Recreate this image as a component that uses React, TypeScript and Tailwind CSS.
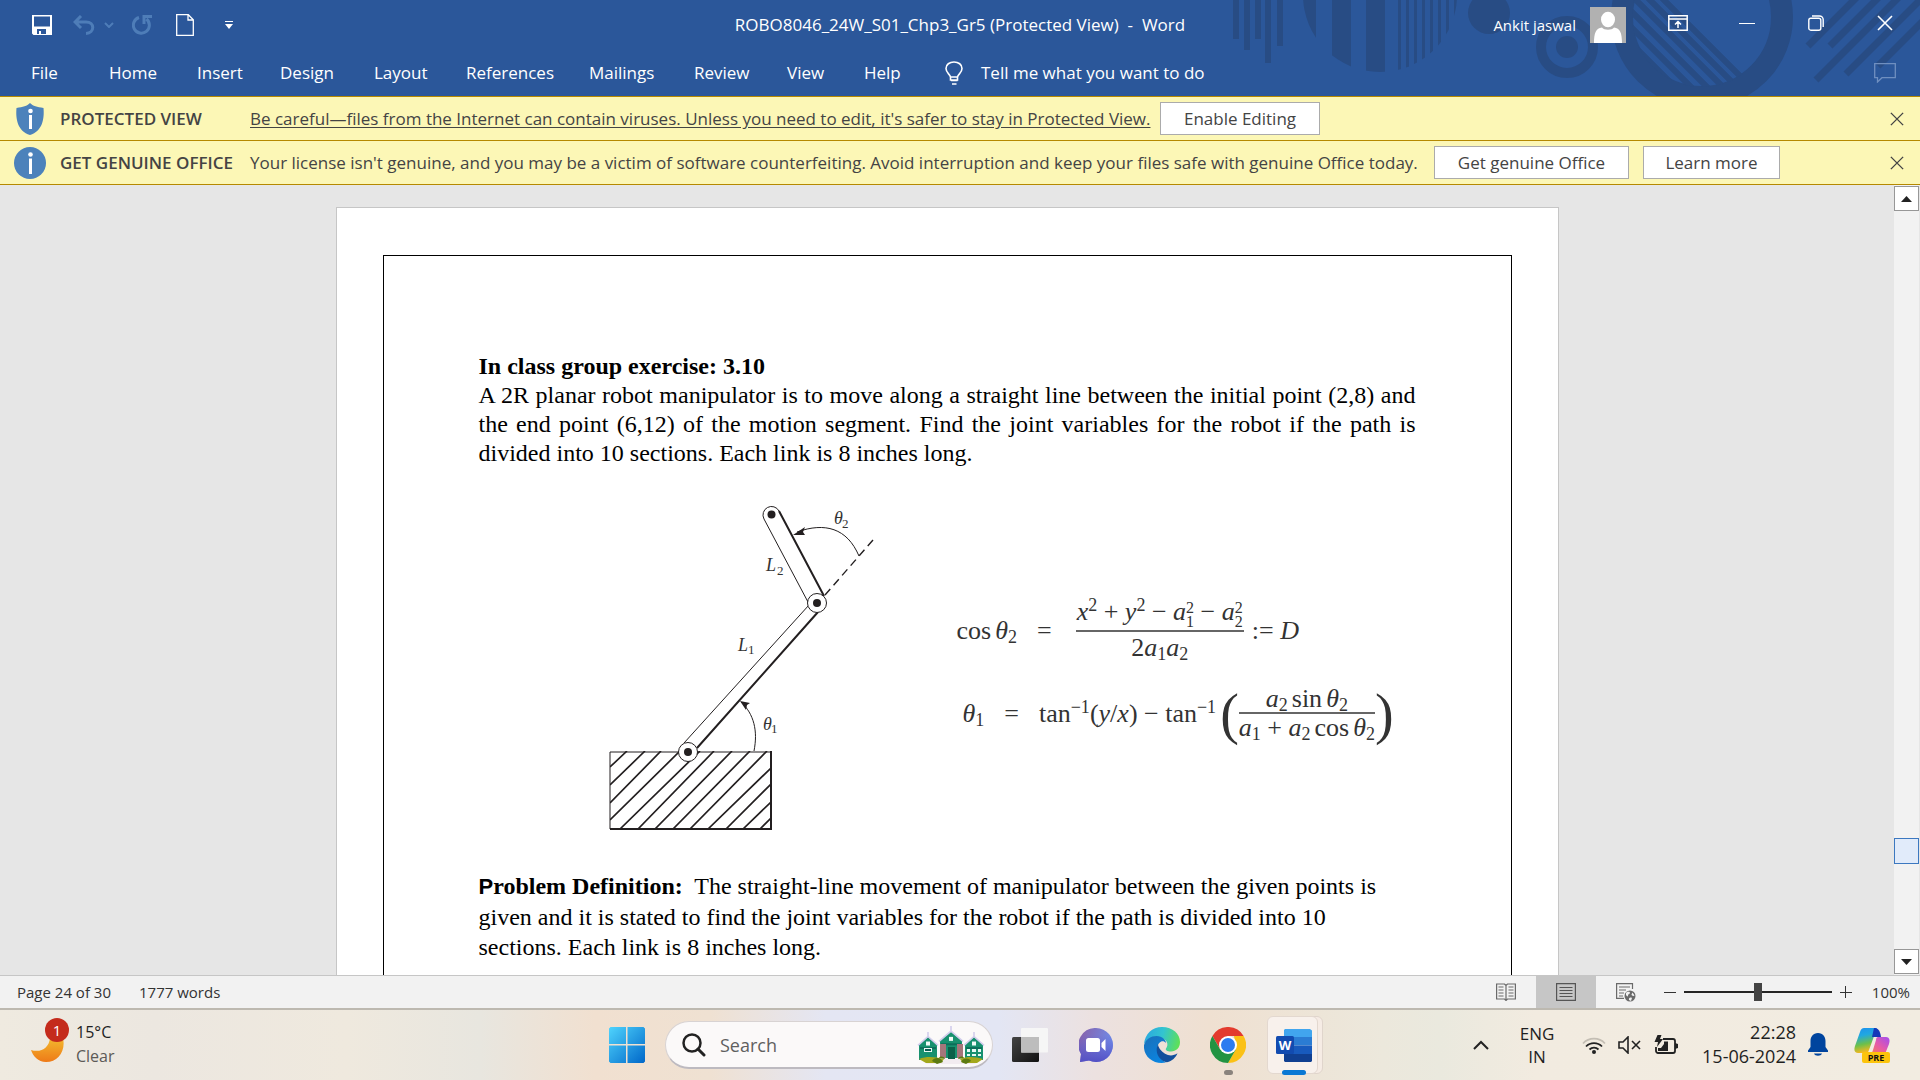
import React from "react";

const UI = "font-['Open_Sans','Noto_Sans',sans-serif]";
const SERIF = "font-['Liberation_Serif',serif]";

const tabs = [
  { name: "File", width: "w-[78px]" },
  { name: "Home", width: "w-[88px]" },
  { name: "Insert", width: "w-[83px]" },
  { name: "Design", width: "w-[94px]" },
  { name: "Layout", width: "w-[92px]" },
  { name: "References", width: "w-[123px]" },
  { name: "Mailings", width: "w-[105px]" },
  { name: "Review", width: "w-[93px]" },
  { name: "View", width: "w-[77px]" },
  { name: "Help", width: "w-[81px]" },
];

function HeaderPattern() {
  return (
    <svg className="pointer-events-none absolute right-0 top-0" width="720" height="96" viewBox="1200 0 720 96" fill="#284c84" aria-hidden="true">
      <defs>
        <clipPath id="striped"><circle cx="1380" cy="-5" r="77" /></clipPath>
        <clipPath id="inner"><circle cx="1702" cy="17" r="70" /></clipPath>
      </defs>
      <path d="M1233 0h6v39h-6zM1244 0h6v50h-6zM1255 0h6v39h-6zM1265 0h6v63h-6zM1277 0h6v46h-6z" />
      <path clipPath="url(#striped)" d="M1300 0h16v80h-16zM1332 0h19v80h-19zM1366 0h19v80h-19zM1398 0h3v80h-3zM1406 0h3v80h-3zM1414 0h3v80h-3zM1422 0h3v80h-3zM1430 0h3v80h-3zM1438 0h3v80h-3zM1446 0h3v80h-3zM1454 0h3v80h-3z" />
      <circle cx="1489" cy="13" r="21" />
      <circle cx="1567" cy="47" r="26" fill="none" stroke="#284c84" strokeWidth="10" />
      <circle cx="1567" cy="47" r="11" />
      <circle cx="1702" cy="17" r="80" fill="none" stroke="#284c84" strokeWidth="22" />
      <g clipPath="url(#inner)" stroke="#284c84" strokeWidth="6">
        <path d="M1612 24l80 80M1612 8l90 90M1616 -4l96 96M1628 -8l98 98M1642 -8l98 98M1656 -8l100 100" />
      </g>
      <g stroke="#284c84" strokeWidth="7">
        <path d="M1808 46L1862 -8M1830 46L1884 -8M1816 80L1904 -8M1846 74L1928 -8M1878 66L1930 14" />
      </g>
    </svg>
  );
}

function WindowButton({ label, children }: { label: string; children: React.ReactNode }) {
  return <button aria-label={label} className="flex h-10 w-[69px] items-center justify-center">{children}</button>;
}

function CloseGlyph({ size }: { size: number }) {
  return (
    <svg width={size} height={size} viewBox="0 0 16 16" fill="none" stroke="currentColor" strokeWidth="1.6">
      <path d="M1 1l14 14M15 1L1 15" />
    </svg>
  );
}

function Header() {
  return (
    <header className="relative h-24 shrink-0 bg-[#2b579a] text-white">
      <HeaderPattern />
      <div className="relative grid h-[50px] grid-cols-[1fr_auto_1fr] items-center">
        <div className="flex items-center pl-5">
          <button aria-label="Save" className="flex w-11 justify-center">
            <svg width="20" height="20" viewBox="0 0 20 20"><path fill="#fff" fillRule="evenodd" d="M0 0h20v20H1.500L0 18.500zM2 1.500v10h16v-10zM5 14v5h2v-3h2v3h5v-5z" /></svg>
          </button>
          <button aria-label="Undo" className="flex w-10 justify-center">
            <svg width="22" height="20" viewBox="0 0 22 20" fill="none" stroke="#4e7db8" strokeWidth="3"><path d="M8 1L2 7l6 6M3 7h10c9 0 9 11 0 11.500" /></svg>
          </button>
          <button aria-label="Undo history" className="flex w-2.5 justify-center">
            <svg width="10" height="6" viewBox="0 0 10 6" fill="none" stroke="#4e7db8" strokeWidth="2"><path d="M1 1l4 4 4-4" /></svg>
          </button>
          <button aria-label="Repeat" className="flex w-14 justify-center">
            <svg width="20" height="20" viewBox="0 0 20 20" fill="none" stroke="#4e7db8" strokeWidth="3"><path d="M7 2.500A8 8 0 1 0 14.500 4M12 9V1.500h8" /></svg>
          </button>
          <button aria-label="New" className="flex w-[30px] justify-center">
            <svg width="18" height="22" viewBox="0 0 18 22" fill="none" stroke="#fff" strokeWidth="1.300"><path d="M.7.7h11.600l5 5v15.600H.7zM12 1v5h5" /></svg>
          </button>
          <button aria-label="Customize Quick Access Toolbar" className="flex w-[58px] justify-center">
            <svg width="8" height="8" viewBox="0 0 8 8" fill="#fff"><path d="M0 0h8v1H0zM0 3h8L4 8z" /></svg>
          </button>
        </div>
        <h1 className="whitespace-pre text-[17px]">{"ROBO8046_24W_S01_Chp3_Gr5 (Protected View)  -  Word"}</h1>
        <div className="flex items-center justify-end">
          <span className="text-[15px]">Ankit jaswal</span>
          <svg className="ml-3.5 mr-[17px]" width="36" height="36" viewBox="0 0 36 36">
            <path fill="#b1b1b1" d="M0 0h36v36H0z" />
            <ellipse cx="18" cy="12.500" rx="7" ry="7.800" fill="#fff" />
            <path fill="#fff" d="M4 36c0-10 2-15 8-15.500 2 3 10 3 12 0 6 .5 8 5.500 8 15.500z" />
          </svg>
          <div className="mr-px flex pb-1">
            <WindowButton label="Ribbon Display Options">
              <svg width="20" height="16" viewBox="0 0 20 16" fill="none" stroke="#fff" strokeWidth="1.500"><path d="M.8.8h18.400v14.400H.8zM1 4h18M10 13V6.500M7 9.500l3-3 3 3" /></svg>
            </WindowButton>
            <WindowButton label="Minimize"><span className="h-px w-4 bg-white" /></WindowButton>
            <WindowButton label="Restore">
              <svg width="16" height="16" viewBox="0 0 16 16" fill="none" stroke="#fff" strokeWidth="1.400"><rect x=".8" y="3.200" width="12" height="12" rx="2" /><path d="M4 1h7.500A3.700 3.700 0 0 1 15.200 4.700V12" /></svg>
            </WindowButton>
            <WindowButton label="Close"><CloseGlyph size={16} /></WindowButton>
          </div>
        </div>
      </div>
      <nav className="relative flex h-[46px] items-center pl-[31px] text-[17px]">
        {tabs.map((t) => (
          <button key={t.name} className={`${t.width} shrink-0 text-left`}>{t.name}</button>
        ))}
        <button className="flex items-center gap-[18px]">
          <svg width="18" height="24" viewBox="0 0 18 24" fill="none" stroke="#fff" strokeWidth="1.600"><path d="M5.500 19v-3C5 13 1 12 1 7.500 1 3.500 4.500 1 9 1s8 2.500 8 6.500c0 4.500-4 5.500-4.500 8.500v3zM5.500 16h7M6 19.500h6.500M7 23h4.500" /></svg>
          Tell me what you want to do
        </button>
        <button aria-label="Comments" className="ml-auto mr-6">
          <svg width="22" height="20" viewBox="0 0 22 20" fill="none" stroke="#6f8fc0" strokeWidth="1.300"><path d="M.7.7h20.600v14H8L3.500 19v-4.300H.7z" /></svg>
        </button>
      </nav>
    </header>
  );
}

function BarButton({ children, width }: { children: React.ReactNode; width: string }) {
  return <button className={`${width} h-[33px] shrink-0 border border-[#ababab] bg-white text-[17px]`}>{children}</button>;
}

function MessageBars() {
  return (
    <div className="shrink-0 bg-[#fcf7b6] text-[17px] text-[#444]">
      <section className="flex h-11 items-center border-t border-[#b58900] pl-3.5">
        <svg width="32" height="32" viewBox="0 0 32 32">
          <path fill="#4c82bb" d="M16 0c3 3 7 4 13.500 5 1 11-1 23-13.500 27C3.500 28 1.500 16 2.500 5 9 4 13 3 16 0z" />
          <circle cx="16.500" cy="8" r="2.300" fill="#fff" /><path fill="#fff" d="M15 12h3v14h-3z" />
        </svg>
        <h2 className="ml-3.5 w-[190px] shrink-0 font-semibold">PROTECTED VIEW</h2>
        <a href="#protected" className="w-[910px] whitespace-nowrap underline underline-offset-2">Be careful—files from the Internet can contain viruses. Unless you need to edit, it's safer to stay in Protected View.</a>
        <BarButton width="w-40">Enable Editing</BarButton>
        <button aria-label="Close" className="ml-auto mr-4"><CloseGlyph size={14} /></button>
      </section>
      <section className="flex h-[45px] items-center border-y border-[#b58900] pl-3.5">
        <svg width="32" height="32" viewBox="0 0 32 32">
          <circle cx="16" cy="16" r="16" fill="#4c82bb" />
          <circle cx="16.500" cy="7.500" r="2.300" fill="#fff" /><path fill="#fff" d="M15 11.500h3V27h-3z" />
        </svg>
        <h2 className="ml-3.5 w-[190px] shrink-0 whitespace-nowrap font-semibold">GET GENUINE OFFICE</h2>
        <p className="w-[1184px] whitespace-nowrap">Your license isn't genuine, and you may be a victim of software counterfeiting. Avoid interruption and keep your files safe with genuine Office today.</p>
        <div className="flex gap-3.5">
          <BarButton width="w-[195px]">Get genuine Office</BarButton>
          <BarButton width="w-[137px]">Learn more</BarButton>
        </div>
        <button aria-label="Close" className="ml-auto mr-4"><CloseGlyph size={14} /></button>
      </section>
    </div>
  );
}

function RobotFigure() {
  return (
    <svg className="shrink-0" width="290" height="345" viewBox="600 495 290 345" fill="none" stroke="#231f20" role="img" aria-label="Two link planar arm">
      <defs><clipPath id="base"><path d="M610 751h161v78H610z" /></clipPath></defs>
      <path clipPath="url(#base)" strokeWidth="1.700" d="M610 767l17-16M610 785l35-34M610 803l51-52M610 820l70-69M620 829l80-78M638 829l76-78M655 829l77-78M673 829l77-78M690 829l77-78M708 829l63-61M726 829l45-45M743 829l28-27M760 829l11-11" />
      <path strokeWidth="1" d="M771 752H610v77" />
      <path strokeWidth="2" d="M610 829h161v-78" />
      <path strokeWidth="1" d="M684 743l125-138M764 519l44 83" />
      <path strokeWidth="2" d="M697 748l121-136M779 511l45 85" />
      <path strokeWidth="1" d="M764 519a8.500 8.500 0 1 1 15-8" />
      <path strokeWidth="1.400" strokeDasharray="8 5" d="M825 595l48-55" />
      <circle cx="688" cy="752" r="9.500" fill="#fff" strokeWidth="1" />
      <circle cx="817" cy="603" r="9.500" fill="#fff" strokeWidth="1" />
      <path strokeWidth="1" d="M754 751c4-20 0-37-13-49M859 556c-12-28-34-34-62-24" />
      <g fill="#231f20" stroke="none">
        <circle cx="688" cy="752" r="4" /><circle cx="817" cy="603" r="4" /><circle cx="771.500" cy="514.500" r="4" />
        <path d="M740 701l10 2-3 2-1 5zM793 535l12-8-2 5 2 3z" />
      </g>
      <g fill="#333" stroke="none" className="font-['Liberation_Serif',serif]">
        <text x="738" y="651" fontSize="18" fontStyle="italic">L</text><text x="748" y="654" fontSize="13">1</text>
        <text x="766" y="571" fontSize="18" fontStyle="italic">L</text><text x="777" y="575" fontSize="13">2</text>
        <text x="763" y="730" fontSize="18" fontStyle="italic">θ</text><text x="771" y="733" fontSize="13">1</text>
        <text x="834" y="524" fontSize="18" fontStyle="italic">θ</text><text x="842" y="528" fontSize="13">2</text>
      </g>
    </svg>
  );
}

const Sub = ({ children }: { children: React.ReactNode }) => <sub className="bottom-[-4px] text-[18px] leading-none">{children}</sub>;
const Sup = ({ children }: { children: React.ReactNode }) => <sup className="top-[-9px] text-[18px] leading-none">{children}</sup>;
const SubSup = ({ sub, sup }: { sub: string; sup: string }) => (
  <span className="inline-flex flex-col align-middle text-[16px] leading-[14px]"><span>{sup}</span><span>{sub}</span></span>
);

function Equations() {
  return (
    <div className="ml-[67px] flex flex-col pt-[103px] text-[26px] leading-none text-[#333]">
      <div className="flex items-center whitespace-nowrap">
        <span>cos<i className="ml-1">θ</i><Sub>2</Sub></span>
        <span className="ml-5">=</span>
        <span className="ml-6 flex flex-col items-center">
          <span className="flex h-[34px] items-center border-b-2 border-[#666] px-px">
            <span><i>x</i><Sup>2</Sup> + <i>y</i><Sup>2</Sup> − <i>a</i><SubSup sup="2" sub="1" /> − <i>a</i><SubSup sup="2" sub="2" /></span>
          </span>
          <span className="flex h-8 items-center"><span>2<i>a</i><Sub>1</Sub><i>a</i><Sub>2</Sub></span></span>
        </span>
        <span className="ml-2">:= <i>D</i></span>
      </div>
      <div className="mt-5 flex h-[60px] items-center whitespace-nowrap pl-1.5">
        <span><i>θ</i><Sub>1</Sub></span>
        <span className="ml-5">=</span>
        <span className="ml-5">tan<Sup>−1</Sup>(<i>y</i>/<i>x</i>) − tan<Sup>−1</Sup></span>
        <span className="ml-1 text-[56px] leading-[60px]">(</span>
        <span className="flex flex-col items-center">
          <span className="flex h-7 w-full items-center justify-center border-b-2 border-[#666]"><span><i>a</i><Sub>2</Sub><span className="mx-1">sin</span><i>θ</i><Sub>2</Sub></span></span>
          <span className="flex h-7 items-center"><span><i>a</i><Sub>1</Sub> + <i>a</i><Sub>2</Sub><span className="mx-1">cos</span><i>θ</i><Sub>2</Sub></span></span>
        </span>
        <span className="text-[56px] leading-[60px]">)</span>
      </div>
    </div>
  );
}

function DocumentArea() {
  return (
    <main className="flex min-h-0 flex-1 overflow-hidden bg-[#e6e6e6]">
      <div className="flex min-w-0 flex-1 justify-center overflow-hidden pt-[22px]">
        <article className={`h-[1580px] w-[1223px] shrink-0 border border-[#c6c6c6] bg-white px-[46px] pt-[47px] text-black ${SERIF}`}>
          <div className="h-full border border-black px-[95px] pt-[96px] text-2xl leading-[29px]">
            <h2 className="font-bold">In class group exercise: 3.10</h2>
            <p className="text-justify">A 2R planar robot manipulator is to move along a straight line between the initial point (2,8) and the end point (6,12) of the motion segment. Find the joint variables for the robot if the path is divided into 10 sections. Each link is 8 inches long.</p>
            <div className="mt-[27px] flex h-[345px] pl-[121px]">
              <RobotFigure />
              <Equations />
            </div>
            <p className="mt-[31px] pr-6 leading-[30px]"><b><span className="font-['Liberation_Sans',sans-serif] text-[22px]">P</span>roblem Definition:</b>&nbsp; The straight-line movement of manipulator between the given points is given and it is stated to find the joint variables for the robot if the path is divided into 10 sections. Each link is 8 inches long.</p>
          </div>
        </article>
      </div>
      <div className="mr-px flex w-[25px] shrink-0 flex-col bg-[#f2f2f2] py-px">
        <button aria-label="Scroll up" className="flex h-[25px] items-center justify-center border border-[#979797] bg-white">
          <svg width="11" height="6" viewBox="0 0 11 6" fill="#222"><path d="M5.500 0L11 6H0z" /></svg>
        </button>
        <div className="grow-[88]" />
        <div className="h-[26px] border border-[#3c78c0] bg-[#e1ebfa]" />
        <div className="grow-[12]" />
        <button aria-label="Scroll down" className="flex h-[25px] items-center justify-center border border-[#979797] bg-white">
          <svg width="11" height="6" viewBox="0 0 11 6" fill="#222"><path d="M0 0h11L5.500 6z" /></svg>
        </button>
      </div>
    </main>
  );
}

function StatusBar() {
  return (
    <footer className="flex h-[33px] shrink-0 items-center border-t border-[#c6c6c6] bg-[#f2f2f2] pl-[17px] pr-2.5 text-[15px] text-[#333]">
      <span className="w-[122px]">Page 24 of 30</span>
      <span>1777 words</span>
      <div className="ml-auto flex h-full items-center">
        <button aria-label="Read Mode" className="flex h-full w-[60px] items-center justify-center">
          <svg width="20" height="18" viewBox="0 0 20 18" fill="none" stroke="#6a6a6a" strokeWidth="1.200"><path d="M10 2.500L8.500 1H.6v15h7.900l1.500 1.500 1.500-1.500h7.900V1h-7.900zM10 2.500v15" /><path d="M2.500 4h5M2.500 7h5M2.500 10h5M2.500 13h5M12.500 4h5M12.500 7h5M12.500 10h5M12.500 13h5" /></svg>
        </button>
        <button aria-label="Print Layout" className="flex h-full w-[60px] items-center justify-center bg-[#c6c6c6]">
          <svg width="20" height="18" viewBox="0 0 20 18" fill="none" stroke="#555" strokeWidth="1.200"><path d="M.6.600h18.800v16.800H.6zM3.500 4.500h13M3.500 7.500h13M3.500 10.500h13M3.500 13.500h13" /></svg>
        </button>
        <button aria-label="Web Layout" className="flex h-full w-[60px] items-center justify-center">
          <svg width="20" height="19" viewBox="0 0 20 19" fill="none" stroke="#6a6a6a" strokeWidth="1.200"><path d="M16.500 6V.6H.6v14.800H8M3 4h11M3 7h7M3 10h5M3 13h4" /><circle cx="14" cy="13" r="5.500" fill="#6a6a6a" stroke="none" /><path fill="#f2f2f2" stroke="none" d="M10 10c2-2 4-1 4 0s-2 1-2 2.500-1 1-2-.5zM16.500 9.500l2 3c-1 1-3 0-3-1zM13 17c-.5-2 1-3 3-2l-1 3z" /></svg>
        </button>
        <button aria-label="Zoom out" className="ml-2 flex h-full w-5 items-center"><span className="h-px w-3 bg-[#333]" /></button>
        <input type="range" aria-label="Zoom" min="0" max="200" defaultValue="100" className="h-[18px] w-[148px] appearance-none bg-transparent [&::-webkit-slider-runnable-track]:h-[2px] [&::-webkit-slider-runnable-track]:bg-[#262626] [&::-webkit-slider-thumb]:mt-[-8px] [&::-webkit-slider-thumb]:h-[18px] [&::-webkit-slider-thumb]:w-2 [&::-webkit-slider-thumb]:appearance-none [&::-webkit-slider-thumb]:bg-[#444]" />
        <button aria-label="Zoom in" className="flex h-full w-7 items-center justify-center">
          <svg width="12" height="12" viewBox="0 0 12 12" stroke="#333"><path d="M0 6.500h12M5.500 0v12" /></svg>
        </button>
        <span className="w-[50px] text-right">100%</span>
      </div>
    </footer>
  );
}

function TaskButton({ label, children }: { label: string; children: React.ReactNode }) {
  return <button aria-label={label} className="relative flex h-16 w-[66px] items-center justify-center">{children}</button>;
}

function House({ x, y, w, h }: { x: number; y: number; w: number; h: number }) {
  return (
    <g transform={`translate(${x} ${y})`}>
      <path fill="#17916f" d={`M1 ${h * 0.45}L${w / 2} ${h * 0.18}L${w - 1} ${h * 0.45}V${h}H1z`} />
      <path fill="none" stroke="#d2cdec" strokeWidth="1.600" d={`M0 ${h * 0.48}L${w / 2} ${h * 0.16}L${w} ${h * 0.48}M${w / 2} ${h * 0.18}V0`} />
      <path fill="#0c6e5a" d={`M2 ${h * 0.54}h${w - 4}v2h-${w - 4}z`} />
      <path fill="#f0fbf7" d={`M${w / 2 - 2} ${h * 0.34}h4v4h-4z`} />
    </g>
  );
}

function Taskbar() {
  return (
    <footer className="grid h-[72px] shrink-0 grid-cols-[1fr_auto_1fr] items-center border-t-2 border-[#bdb9b0] bg-[linear-gradient(90deg,#efeae0_0%,#ece7e0_8%,#efe9de_18%,#e8e6df_25%,#f1e0d0_31%,#efe1d2_37%,#e4e6f3_43%,#e3e6f4_52%,#ece1e0_57%,#efe0d1_63%,#ece8dc_72%,#eae9de_75%,#f2ebe0_80%,#f2ece1_100%)] text-[#1f1f1f]">
      <button className="flex items-center pb-0.5 text-left text-base leading-6">
        <span className="relative ml-[30px] mr-[11px] block h-10 w-[35px]">
          <svg className="absolute left-0 top-3" width="35" height="27" viewBox="0 0 35 27">
            <defs><linearGradient id="moon" x2="0" y2="1"><stop stopColor="#f3b92e" /><stop offset="1" stopColor="#ee7a18" /></linearGradient></defs>
            <path fill="url(#moon)" d="M33 2c3 13-5 24-17 24C8 26 3 20 1 14c10 3 18-2 19-12z" />
          </svg>
          <span className="absolute left-[15px] top-[-6px] flex size-6 items-center justify-center rounded-full bg-[#c42b1c] text-[15px] text-white">1</span>
        </span>
        <span><span className="block">15°C</span><span className="block text-[#5c5a57]">Clear</span></span>
      </button>

      <div className="flex items-center pl-4">
        <button aria-label="Start">
          <svg width="36" height="36" viewBox="0 0 36 36">
            <defs><linearGradient id="win" x2="1" y2="1"><stop stopColor="#4fd4fd" /><stop offset="1" stopColor="#0067c9" /></linearGradient></defs>
            <path fill="url(#win)" d="M1.500 0H17v17H0V1.500zM18.500 0h16L36 1.500V17H18.500zM0 18.500h17V36H1.500L0 34.500zM18.500 18.500H36v16L34.500 36h-16z" />
          </svg>
        </button>
        <label className="ml-5 mr-1 flex h-12 w-[328px] items-center rounded-full border border-b-2 border-[#d8d3d3] border-b-[#bdbac0] bg-[#fbf9f9] pl-4">
          <svg width="24" height="24" viewBox="0 0 24 24" fill="none" stroke="#222" strokeWidth="2.500"><circle cx="10" cy="10" r="8.500" /><path d="M16 16l6 6" strokeLinecap="round" strokeWidth="3" /></svg>
          <input aria-label="Search" placeholder="Search" className="ml-3.5 min-w-0 flex-1 bg-transparent text-lg outline-none placeholder:text-[#5f5f5f]" />
          <svg className="mr-[7px]" width="68" height="38" viewBox="0 0 68 38">
            <path fill="#f2ecf0" d="M4 33h60l-6 5H10z" />
            <House x={1} y={6} w={20} h={28} />
            <House x={22} y={0} w={24} h={32} />
            <House x={47} y={6} w={20} h={28} />
            <path fill="#a5767a" d="M23 18h6v14h-6zM40 18h6v14h-6z" />
            <path fill="#0b6149" d="M31 21h7v12h-7z" />
            <path fill="#e9faf5" d="M7 22h8v4H7zM50 23h3v3h-3zM55 23h4v3h-4zM61 23h3v3h-3zM50 28h3v2h-3zM55 28h4v2h-4zM61 28h3v2h-3z" />
            <path fill="#0b5b52" d="M8 23h6v2H8z" />
            <path fill="#a3a81c" d="M2 33c8-3 16-2 25 0l-3 4H9zM43 33c8-3 16-2 23 0l-6 4H46z" />
            <path fill="#5c7a12" d="M15 35c2-4 9-4 11 1l-6 2zM44 36c2-5 9-4 10-1l-5 3zM22 32c1-2 5-2 6 1zM41 33c1-3 5-3 6-1z" />
          </svg>
        </label>
        <TaskButton label="Task View">
          <svg width="36" height="34" viewBox="0 0 36 34">
            <defs><linearGradient id="dark" x2="1" y2="1"><stop stopColor="#444" /><stop offset="1" stopColor="#111" /></linearGradient></defs>
            <rect y="9" width="27" height="25" rx="1.500" fill="url(#dark)" /><rect x="9" width="27" height="24.500" rx="1" fill="#f6f6f6" /><path fill="#bdbdbd" d="M9 9h18v15.500H9z" />
          </svg>
        </TaskButton>
        <TaskButton label="Chat">
          <svg width="34" height="34" viewBox="0 0 34 34">
            <defs><linearGradient id="chat" x1="0" x2="1" y2=".3"><stop stopColor="#8a5fa6" /><stop offset="1" stopColor="#6f8be8" /></linearGradient><linearGradient id="chat2" x2="0" y2="1"><stop offset=".2" stopColor="#5b5bd0" stopOpacity="0" /><stop offset="1" stopColor="#5350c4" /></linearGradient></defs>
            <path fill="url(#chat)" d="M17 0a17 17 0 1 1-7 32.500L1 34l1-8A17 17 0 0 1 17 0z" />
            <path fill="url(#chat2)" d="M17 0a17 17 0 1 1-7 32.500L1 34l1-8A17 17 0 0 1 17 0z" />
            <rect x="7" y="10" width="14" height="14" rx="2.500" fill="#fff" /><path fill="#fff" d="M22.500 15l4-4v12l-4-4z" />
          </svg>
        </TaskButton>
        <TaskButton label="Microsoft Edge">
          <svg width="36" height="36" viewBox="0 0 36 36">
            <defs>
              <linearGradient id="e1" x1="0" y1=".3" x2="1" y2=".5"><stop stopColor="#2aa8e0" /><stop offset=".5" stopColor="#33c4d0" /><stop offset="1" stopColor="#5ee058" /></linearGradient>
              <linearGradient id="e2" x2=".6" y2="1"><stop stopColor="#1b6fb8" /><stop offset="1" stopColor="#0a84e0" /></linearGradient>
            </defs>
            <path fill="url(#e1)" d="M0 17C1 7 8 0 18 0c11 0 18 7 18 15 0 6-4 9.500-9 9.500-4 0-6-1.500-5-3 3-4 1-9-4-10C11 10 4 12 0 17z" />
            <path fill="url(#e2)" d="M0 18C2 12 7 9 12.500 9c6 0 9.500 4 9.500 7-3-4-8-1-8.500 4C13 27 17 33 22 35.500 10 38-1 30 0 18z" />
            <path fill="#114f9c" d="M14 17c-4 9 2 17 9 18.300 5-1 9-5 10.500-9-6 4-13 2-17.500-4-1-2-2-3-2-5.300z" />
          </svg>
        </TaskButton>
        <TaskButton label="Google Chrome">
          <svg width="36" height="36" viewBox="0 0 36 36">
            <path fill="#e33b2e" d="M2.400 9A18 18 0 0 1 33.600 9H18l-8 13z" />
            <path fill="#fbc116" d="M33.600 9A18 18 0 0 1 18 36l8-14-2-13z" />
            <path fill="#229342" d="M2.400 9A18 18 0 0 0 18 36l7.800-13.500H10.200z" />
            <circle cx="18" cy="18" r="9" fill="#fff" /><circle cx="18" cy="18" r="7" fill="#2d7cf0" />
          </svg>
          <span className="absolute bottom-[2px] h-[5px] w-[9px] rounded-full bg-[#8a837d]" />
        </TaskButton>
        <TaskButton label="Word">
          <span className="absolute left-3 h-[58px] w-[50px] rounded-md border border-[#e0d5cc] bg-[#f6ece5]" />
          <span className="absolute left-1.5 h-[58px] w-[51px] rounded-md border border-[#e3d8cf] bg-[#f8f1ec]" />
          <svg className="relative" width="36" height="33" viewBox="0 0 36 33">
            <path fill="#41a5ee" d="M9 0h25l2 1.500V8H8V1z" /><path fill="#2b7cd3" d="M8 8h28v8.500H8z" /><path fill="#185abd" d="M8 16.500h28V25H8z" /><path fill="#103f91" d="M8 25h28v7l-1 1H9l-1-1z" />
            <rect y="7" width="18" height="18" rx="1.500" fill="#124bb0" /><text x="9" y="20.500" textAnchor="middle" fontSize="13" fontWeight="700" fill="#fff">W</text>
          </svg>
          <span className="absolute bottom-[2px] h-[5px] w-6 rounded-full bg-[#0a78d4]" />
        </TaskButton>
      </div>

      <div className="flex items-center justify-end text-[17px] leading-6">
        <button aria-label="Show hidden icons"><svg width="16" height="10" viewBox="0 0 16 10" fill="none" stroke="#222" strokeWidth="2"><path d="M1 9l7-7 7 7" /></svg></button>
        <button className="ml-[30px] w-9 text-center leading-[23px]">ENG IN</button>
        <button aria-label="Network, volume and battery" className="ml-[27px] flex items-center gap-3">
          <svg width="24" height="18" viewBox="0 0 24 18" fill="none" stroke="#222" strokeWidth="1.800"><path stroke="#c4beb4" d="M1 7.500a15 15 0 0 1 22 0" /><path d="M4 10.500a11 11 0 0 1 16 0M7.500 13.500a6.500 6.500 0 0 1 9 0" /><circle cx="12" cy="16" r="2" fill="#222" stroke="none" /></svg>
          <svg width="24" height="18" viewBox="0 0 24 18" fill="none" stroke="#222" strokeWidth="1.600"><path d="M1 6v6h4l5 5V1L5 6zM14 5l8 8M22 5l-8 8" /></svg>
          <svg width="24" height="20" viewBox="0 0 24 20" fill="none" stroke="#222" strokeWidth="1.800"><path d="M9 4h10a2 2 0 0 1 2 2v10a2 2 0 0 1-2 2H4a2 2 0 0 1-2-2v-4" /><path fill="#222" stroke="none" d="M10 6.500h4V16H4v-3h3l3-4zM21 8l3 1v4l-3 1zM3.500 0h4L6 4h3l-6 8 1-5H.5z" /></svg>
        </button>
        <button className="ml-6 whitespace-nowrap pb-0.5 text-right text-lg leading-6"><time className="block">22:28</time><time className="block">15-06-2024</time></button>
        <button aria-label="Notifications" className="ml-3">
          <svg width="20" height="24" viewBox="0 0 20 24" fill="#00449e"><path d="M10 0c5 0 7.500 4 7.500 8v6L20 17.500V19H0v-1.500L2.500 14V8c0-4 2.500-8 7.500-8zM6 20.500h8c-1 3-7 3-8 0z" /></svg>
        </button>
        <button aria-label="Copilot" className="ml-[26px] mr-[30px]">
          <svg width="36" height="36" viewBox="0 0 36 36">
            <defs>
              <linearGradient id="c1" x2=".2" y2="1"><stop stopColor="#1e90f0" /><stop offset=".35" stopColor="#20a8e0" /><stop offset=".7" stopColor="#6cc04a" /><stop offset="1" stopColor="#f2b820" /></linearGradient>
              <linearGradient id="c2" x1="1" x2="0" y2="1"><stop stopColor="#a24df0" /><stop offset=".5" stopColor="#e65aa8" /><stop offset="1" stopColor="#f8844a" /></linearGradient>
            </defs>
            <path fill="url(#c1)" d="M10 1h13l-8 22c-1 3-2 3-4 3H4c-4 0-4-4-3-7L6 5c1-3 2-4 4-4z" />
            <path fill="#1538b8" d="M20 1c4 0 6 2 7 9h-9z" />
            <path fill="url(#c2)" d="M24 10h8c4 0 4 4 3 7l-4 10H14c3 0 4-1 5-4l3-10c0-2 1-3 2-3z" />
            <rect x="8" y="25" width="28" height="11" rx="2" fill="#fcc40c" /><text x="22" y="34" textAnchor="middle" fontSize="9" fontWeight="700" fill="#111">PRE</text>
          </svg>
        </button>
      </div>
    </footer>
  );
}

export default function App() {
  return (
    <div className={`flex h-screen flex-col overflow-hidden ${UI}`}>
      <Header />
      <MessageBars />
      <DocumentArea />
      <StatusBar />
      <Taskbar />
    </div>
  );
}
